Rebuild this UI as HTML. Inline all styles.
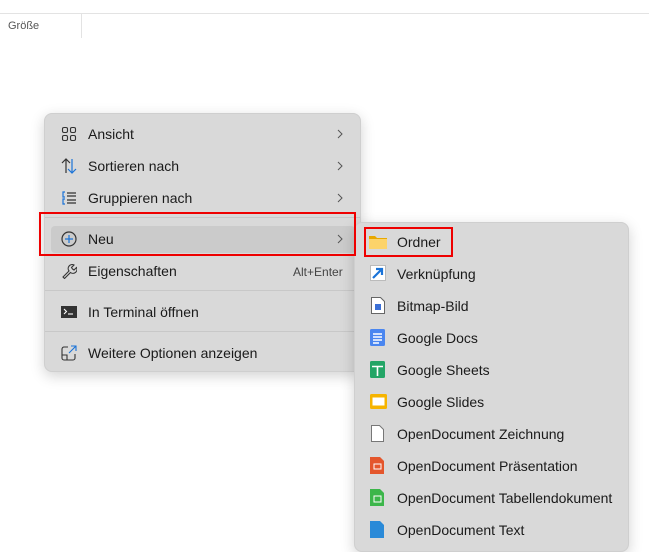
<!DOCTYPE html>
<html><head><meta charset="utf-8"><style>
*{margin:0;padding:0;box-sizing:border-box}
body{width:649px;height:530px;background:#fff;font-family:"Liberation Sans",sans-serif;position:relative;overflow:hidden;color:#1a1a1a}
.abs{position:absolute}
.menu{position:absolute;background:#d9d9d9;border:1px solid #cfcfcf;border-radius:8px;box-shadow:0 4px 14px rgba(0,0,0,.18)}
.t{position:absolute;font-size:14px;line-height:16px}
.ic{position:absolute}
.chev{position:absolute}
.sep{position:absolute;left:0;right:0;height:1px;background:#c8c8c8}
</style></head><body>
<div class="abs" style="left:0;top:13px;width:649px;height:1px;background:#e3e3e3"></div>
<div class="abs" style="left:81px;top:13px;width:1px;height:25px;background:#e3e3e3"></div>
<div class="abs" style="left:8px;top:20px;font-size:11px;color:#555">Größe</div>

<div class="menu" style="left:44px;top:113px;width:317px;height:259px">
 <div class="abs" style="left:6px;top:112px;width:304px;height:27px;background:#cbcbcb;border-radius:4px"></div>
 <svg class="ic" style="left:16px;top:12px" width="16" height="16" fill="none" stroke="#333" stroke-width="1.1"><rect x="1.5" y="1.5" width="5" height="5" rx="1.5"/><rect x="9.5" y="1.5" width="5" height="5" rx="1.5"/><rect x="1.5" y="9.5" width="5" height="5" rx="1.5"/><rect x="9.5" y="9.5" width="5" height="5" rx="1.5"/></svg>
 <div class="t" style="left:43px;top:12px">Ansicht</div><svg class="chev" style="left:292px;top:15px" width="6" height="10"><path d="M1 1l4 4-4 4" stroke="#555" fill="none"/></svg>
 <svg class="ic" style="left:16px;top:44px" width="16" height="16" fill="none" stroke-width="1.2"><path d="M5 15V1M1 5l4-4 4 4" stroke="#333"/><path d="M11 1v14M7 11l4 4 4-4" stroke="#1a73d8"/></svg>
 <div class="t" style="left:43px;top:44px">Sortieren nach</div><svg class="chev" style="left:292px;top:47px" width="6" height="10"><path d="M1 1l4 4-4 4" stroke="#555" fill="none"/></svg>
 <svg class="ic" style="left:16px;top:76px" width="16" height="16" fill="none" stroke-width="1.2"><path d="M4 2H2v5h2M4 9H2v5h2" stroke="#1a73d8"/><path d="M6 3h9M6 6h9M6 10h9M6 13h9" stroke="#333"/></svg>
 <div class="t" style="left:43px;top:76px">Gruppieren nach</div><svg class="chev" style="left:292px;top:79px" width="6" height="10"><path d="M1 1l4 4-4 4" stroke="#555" fill="none"/></svg>
 <div class="sep" style="top:103px"></div>
 <svg class="ic" style="left:16px;top:117px" width="16" height="16" fill="none" stroke-width="1.2"><circle cx="8" cy="8" r="7" stroke="#333"/><path d="M8 4v8M4 8h8" stroke="#1a73d8"/></svg>
 <div class="t" style="left:43px;top:117px">Neu</div><svg class="chev" style="left:292px;top:120px" width="6" height="10"><path d="M1 1l4 4-4 4" stroke="#555" fill="none"/></svg>
 <svg class="ic" style="left:16px;top:149px" width="16" height="16" fill="none" stroke="#333" stroke-width="1.1"><path d="M2 14l6-6a4 4 0 0 1 5-6l-2.5 2.5 1 1.5 1.5 1L15.5 4.5a4 4 0 0 1-6 5l-6 6z"/></svg>
 <div class="t" style="left:43px;top:149px">Eigenschaften</div><div class="t" style="left:248px;top:150px;font-size:12px;color:#444">Alt+Enter</div>
 <div class="sep" style="top:176px"></div>
 <svg class="ic" style="left:16px;top:190px" width="16" height="16"><rect x="0" y="2" width="16" height="12" fill="#333"/><path d="M3 5l2.5 2.5L3 10" stroke="#fff" fill="none" stroke-width="1.1"/><path d="M7 10h5" stroke="#fff" stroke-width="1.1"/></svg>
 <div class="t" style="left:43px;top:190px">In Terminal öffnen</div>
 <div class="sep" style="top:217px"></div>
 <svg class="ic" style="left:16px;top:231px" width="16" height="16" fill="none" stroke-width="1.1"><path d="M7 2H3a2 2 0 0 0-2 2v9a2 2 0 0 0 2 2h9a2 2 0 0 0 2-2V9M1 10h5v5" stroke="#333"/><path d="M10 1h5v5M15 1L8 8" stroke="#1a73d8"/></svg>
 <div class="t" style="left:43px;top:231px">Weitere Optionen anzeigen</div>
</div>

<div class="menu" style="left:354px;top:222px;width:275px;height:330px">
 <svg class="ic" style="left:14px;top:11px" width="18" height="16"><path d="M0 2h6l2 2h10v11H0z" fill="#e8a800"/><rect x="0" y="5" width="18" height="10" fill="#fcd36a"/></svg>
 <div class="t" style="left:42px;top:11px">Ordner</div>
 <svg class="ic" style="left:15px;top:42px" width="16" height="16"><rect x="0.5" y="0.5" width="15" height="15" fill="#fff" stroke="#bbb"/><path d="M3 13L12 4M6 4h6v6" stroke="#1a73d8" stroke-width="2.2" fill="none"/></svg>
 <div class="t" style="left:42px;top:43px">Verknüpfung</div>
 <svg class="ic" style="left:16px;top:74px" width="14" height="17"><path d="M.5.5h9l4 4v12H.5z" fill="#fff" stroke="#666"/><rect x="4" y="7" width="6" height="6" fill="#3b6fd6"/></svg>
 <div class="t" style="left:42px;top:75px">Bitmap-Bild</div>
 <svg class="ic" style="left:15px;top:106px" width="15" height="17"><rect width="15" height="17" rx="1.5" fill="#4a86f0"/><path d="M3 5h9M3 8h9M3 11h9M3 14h6" stroke="#fff" stroke-width="1.5"/></svg>
 <div class="t" style="left:42px;top:107px">Google Docs</div>
 <svg class="ic" style="left:15px;top:138px" width="15" height="17"><rect width="15" height="17" rx="1.5" fill="#23a566"/><path d="M2 5.5h11M7.5 5v10" stroke="#fff" stroke-width="1.6"/></svg>
 <div class="t" style="left:42px;top:139px">Google Sheets</div>
 <svg class="ic" style="left:15px;top:171px" width="17" height="15"><rect width="17" height="15" rx="1.5" fill="#f6b400"/><rect x="2.5" y="3.5" width="12" height="8" fill="#fff"/></svg>
 <div class="t" style="left:42px;top:171px">Google Slides</div>
 <svg class="ic" style="left:16px;top:202px" width="13" height="17"><path d="M.5.5h8l4 4v12H.5z" fill="#fff" stroke="#777"/></svg>
 <div class="t" style="left:42px;top:203px">OpenDocument Zeichnung</div>
 <svg class="ic" style="left:15px;top:234px" width="14" height="17"><path d="M0 0h10l4 4v13H0z" fill="#e4562c"/><rect x="4" y="7" width="7" height="5" fill="none" stroke="#fff"/></svg>
 <div class="t" style="left:42px;top:235px">OpenDocument Präsentation</div>
 <svg class="ic" style="left:15px;top:266px" width="14" height="17"><path d="M0 0h10l4 4v13H0z" fill="#3cb64a"/><rect x="4" y="7" width="7" height="6" fill="none" stroke="#fff"/></svg>
 <div class="t" style="left:42px;top:267px">OpenDocument Tabellendokument</div>
 <svg class="ic" style="left:15px;top:298px" width="14" height="17"><path d="M0 0h10l4 4v13H0z" fill="#2a8ad8"/></svg>
 <div class="t" style="left:42px;top:299px">OpenDocument Text</div>
</div>

<div class="abs" style="left:39px;top:212px;width:317px;height:44px;border:2px solid #e00"></div>
<div class="abs" style="left:364px;top:227px;width:89px;height:30px;border:2px solid #e00"></div>
</body></html>
